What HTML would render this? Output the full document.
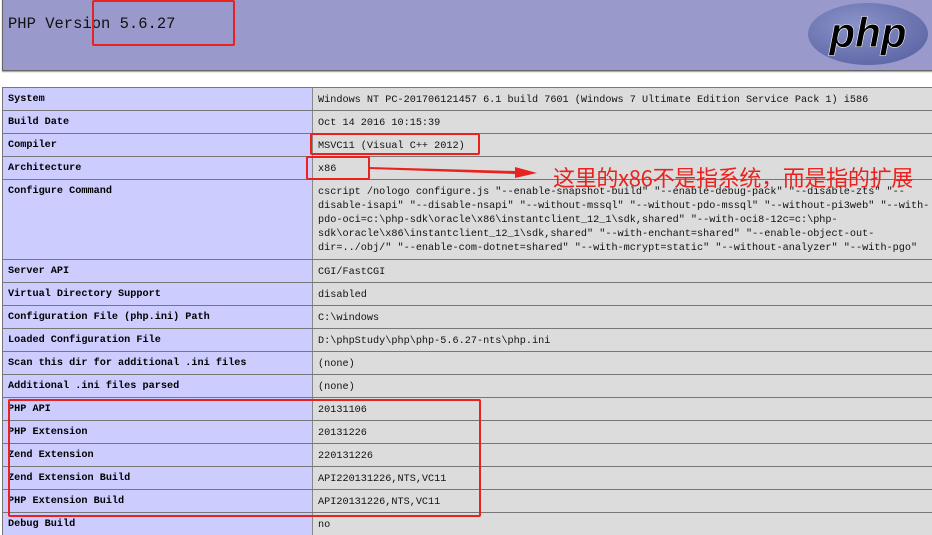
<!DOCTYPE html>
<html><head><meta charset="utf-8"><style>
body{margin:0;width:932px;height:522px;overflow:hidden;background:#fff;position:relative;font-family:"Liberation Mono","Noto Sans CJK SC",monospace}
.hdr{position:absolute;left:2px;top:-2px;width:940px;height:71px;background:#9999cc;border:1px solid #666;box-shadow:0 1px 1px #999}
.hdr h1{position:absolute;left:5px;top:16px;margin:0;font-weight:normal;font-size:15.5px;font-family:"Liberation Mono",monospace;color:#111}
.row{position:absolute;left:2px;width:940px;border-top:1px solid #777}
.l{position:absolute;left:0;top:0;bottom:0;width:309px;background:#ccccff;border-right:1px solid #888;border-left:1px solid #777}
.v{position:absolute;left:311px;top:0;bottom:0;right:0;background:#dcdcdc}
.l span{position:absolute;left:5px;top:6px;font-weight:bold;font-size:10.2px;color:#000}
.v span{position:absolute;left:5px;top:6px;font-size:10.2px;color:#111;white-space:pre;line-height:14px}
.box{position:absolute;border:2px solid #e8231f;border-radius:2px}
</style></head><body>
<div class="hdr"><h1>PHP Version 5.6.27</h1></div>
<svg style="position:absolute;left:806px;top:2px" width="126" height="66">
<defs><radialGradient id="g" cx="40%" cy="35%" r="70%"><stop offset="0" stop-color="#8a93c8"/><stop offset="1" stop-color="#5e67a6"/></radialGradient></defs>
<ellipse cx="62" cy="32" rx="60" ry="31" fill="url(#g)"/>
<text x="62" y="45" text-anchor="middle" font-family="Liberation Sans" font-weight="bold" font-style="italic" font-size="42" fill="#000" stroke="#fff" stroke-width="0.6">php</text>
</svg>
<div class="row" style="top:87px;height:22px"><div class="l"><span>System</span></div><div class="v"><span>Windows NT PC-201706121457 6.1 build 7601 (Windows 7 Ultimate Edition Service Pack 1) i586</span></div></div>
<div class="row" style="top:110px;height:22px"><div class="l"><span>Build Date</span></div><div class="v"><span>Oct 14 2016 10:15:39</span></div></div>
<div class="row" style="top:133px;height:22px"><div class="l"><span>Compiler</span></div><div class="v"><span>MSVC11 (Visual C++ 2012)</span></div></div>
<div class="row" style="top:156px;height:22px"><div class="l"><span>Architecture</span></div><div class="v"><span>x86</span></div></div>
<div class="row" style="top:179px;height:79px"><div class="l"><span>Configure Command</span></div><div class="v"><span>cscript /nologo configure.js "--enable-snapshot-build" "--enable-debug-pack" "--disable-zts" "--
disable-isapi" "--disable-nsapi" "--without-mssql" "--without-pdo-mssql" "--without-pi3web" "--with-
pdo-oci=c:\php-sdk\oracle\x86\instantclient_12_1\sdk,shared" "--with-oci8-12c=c:\php-
sdk\oracle\x86\instantclient_12_1\sdk,shared" "--with-enchant=shared" "--enable-object-out-
dir=../obj/" "--enable-com-dotnet=shared" "--with-mcrypt=static" "--without-analyzer" "--with-pgo"</span></div></div>
<div class="row" style="top:259px;height:22px"><div class="l"><span>Server API</span></div><div class="v"><span>CGI/FastCGI</span></div></div>
<div class="row" style="top:282px;height:22px"><div class="l"><span>Virtual Directory Support</span></div><div class="v"><span>disabled</span></div></div>
<div class="row" style="top:305px;height:22px"><div class="l"><span>Configuration File (php.ini) Path</span></div><div class="v"><span>C:\windows</span></div></div>
<div class="row" style="top:328px;height:22px"><div class="l"><span>Loaded Configuration File</span></div><div class="v"><span>D:\phpStudy\php\php-5.6.27-nts\php.ini</span></div></div>
<div class="row" style="top:351px;height:22px"><div class="l"><span>Scan this dir for additional .ini files</span></div><div class="v"><span>(none)</span></div></div>
<div class="row" style="top:374px;height:22px"><div class="l"><span>Additional .ini files parsed</span></div><div class="v"><span>(none)</span></div></div>
<div class="row" style="top:397px;height:22px"><div class="l"><span>PHP API</span></div><div class="v"><span>20131106</span></div></div>
<div class="row" style="top:420px;height:22px"><div class="l"><span>PHP Extension</span></div><div class="v"><span>20131226</span></div></div>
<div class="row" style="top:443px;height:22px"><div class="l"><span>Zend Extension</span></div><div class="v"><span>220131226</span></div></div>
<div class="row" style="top:466px;height:22px"><div class="l"><span>Zend Extension Build</span></div><div class="v"><span>API220131226,NTS,VC11</span></div></div>
<div class="row" style="top:489px;height:22px"><div class="l"><span>PHP Extension Build</span></div><div class="v"><span>API20131226,NTS,VC11</span></div></div>
<div class="row" style="top:512px;height:22px"><div class="l"><span>Debug Build</span></div><div class="v"><span>no</span></div></div>
<div class="box" style="left:92px;top:0px;width:139px;height:42px"></div>
<div class="box" style="left:310px;top:133px;width:166px;height:18px"></div>
<div class="box" style="left:306px;top:156px;width:60px;height:20px"></div>
<div class="box" style="left:8px;top:399px;width:469px;height:114px"></div>
<svg style="position:absolute;left:365px;top:160px" width="180" height="22"><path d="M4 7 L150 11 L150 7 L172 13 L150 18 L150 14 L4 9 Z" fill="#e8231f"/></svg>
<div style="position:absolute;left:553px;top:164px;font-family:'Noto Sans CJK SC',sans-serif;font-size:22px;letter-spacing:-0.3px;color:#e8231f;line-height:26px;white-space:nowrap">这里的x86不是指系统，而是指的扩展</div>
</body></html>
